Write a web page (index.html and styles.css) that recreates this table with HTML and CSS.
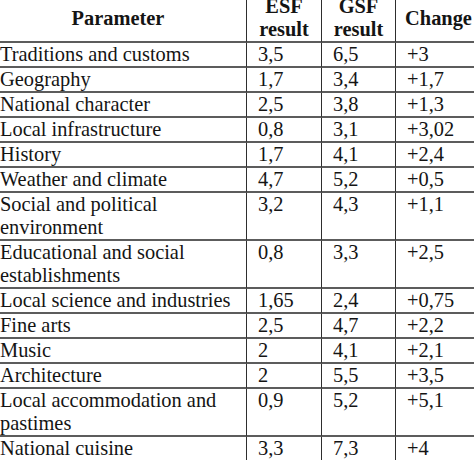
FILE: index.html
```html
<!DOCTYPE html>
<html>
<head>
<meta charset="utf-8">
<link rel="stylesheet" href="styles.css">
</head>
<body>
<table class="results">
  <colgroup>
    <col class="c-param">
    <col class="c-esf">
    <col class="c-gsf">
    <col class="c-change">
  </colgroup>
  <thead>
    <tr>
      <th class="param">Parameter</th>
      <th>ESF<br>result</th>
      <th>GSF<br>result</th>
      <th>Change</th>
    </tr>
  </thead>
  <tbody>
    <tr><td class="param">Traditions and customs</td><td>3,5</td><td>6,5</td><td>+3</td></tr>
    <tr><td class="param">Geography</td><td>1,7</td><td>3,4</td><td>+1,7</td></tr>
    <tr><td class="param">National character</td><td>2,5</td><td>3,8</td><td>+1,3</td></tr>
    <tr><td class="param">Local infrastructure</td><td>0,8</td><td>3,1</td><td>+3,02</td></tr>
    <tr><td class="param">History</td><td>1,7</td><td>4,1</td><td>+2,4</td></tr>
    <tr><td class="param">Weather and climate</td><td>4,7</td><td>5,2</td><td>+0,5</td></tr>
    <tr><td class="param">Social and political environment</td><td>3,2</td><td>4,3</td><td>+1,1</td></tr>
    <tr><td class="param">Educational and social establishments</td><td>0,8</td><td>3,3</td><td>+2,5</td></tr>
    <tr><td class="param">Local science and industries</td><td>1,65</td><td>2,4</td><td>+0,75</td></tr>
    <tr><td class="param">Fine arts</td><td>2,5</td><td>4,7</td><td>+2,2</td></tr>
    <tr><td class="param">Music</td><td>2</td><td>4,1</td><td>+2,1</td></tr>
    <tr><td class="param">Architecture</td><td>2</td><td>5,5</td><td>+3,5</td></tr>
    <tr><td class="param">Local accommodation and pastimes</td><td>0,9</td><td>5,2</td><td>+5,1</td></tr>
    <tr><td class="param">National cuisine</td><td>3,3</td><td>7,3</td><td>+4</td></tr>
  </tbody>
</table>
</body>
</html>
```

FILE: styles.css
```css
html, body {
  margin: 0;
  padding: 0;
  background: #ffffff;
  overflow: hidden;
}

body {
  width: 474px;
  height: 460px;
}

.results {
  margin: -5px 0 0 -4px;
  width: 486px;
  table-layout: fixed;
  border-collapse: separate;
  border-spacing: 0;
  font-family: "Liberation Serif", "Times New Roman", serif;
  font-size: 20.4px;
  line-height: 23px;
  color: #141414;
}

.c-param { width: 251px; }
.c-esf { width: 75px; }
.c-gsf { width: 74px; }
.c-change { width: 86px; }

.results th,
.results td {
  box-sizing: border-box;
  padding: 0 0 0 11px;
  border-right: 1px solid #2e2e2e;
  border-bottom: 2px solid #5c5c5c;
  text-align: left;
  vertical-align: top;
}

.results th {
  font-weight: bold;
  text-align: center;
  vertical-align: middle;
  padding: 0;
}

.results th.param {
  padding: 0 10px 0 4px;
}

.results td.param {
  padding: 0 10px 0 4px;
}
```
